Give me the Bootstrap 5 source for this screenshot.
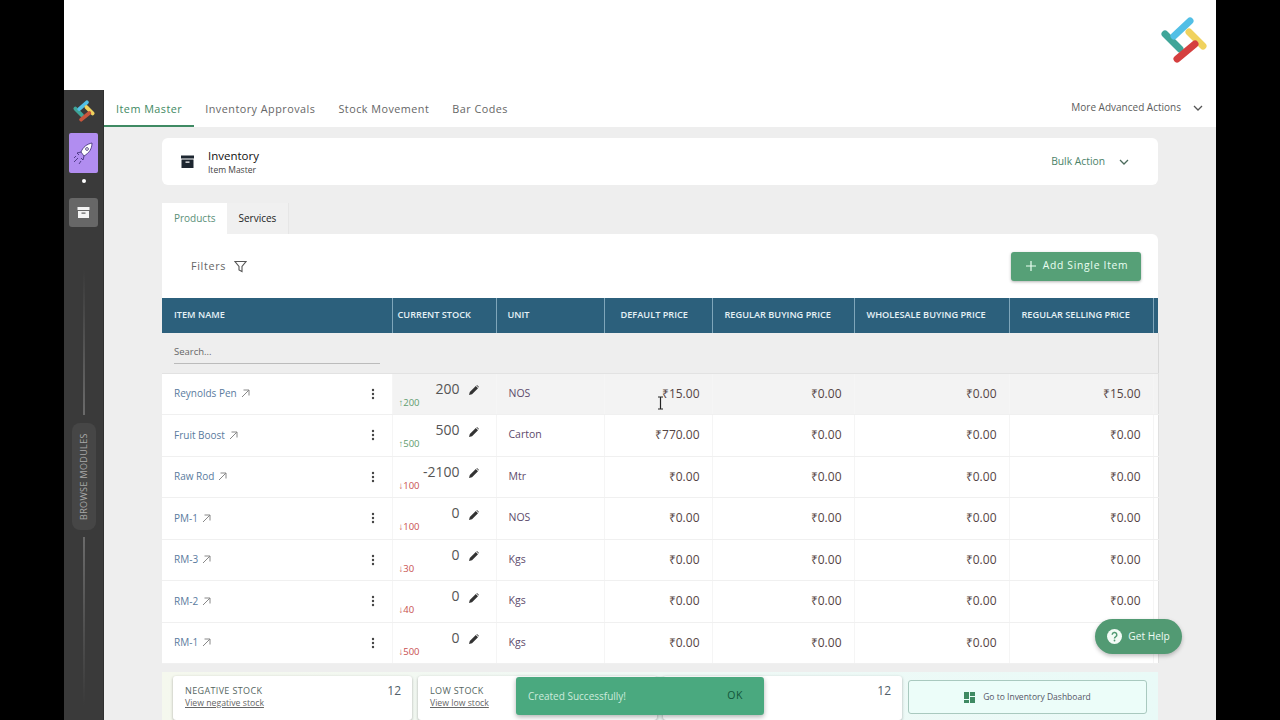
<!DOCTYPE html>
<html lang="en">
<head>
<meta charset="utf-8">
<title>Inventory</title>
<link href="https://cdn.jsdelivr.net/npm/bootstrap@5.3.0/dist/css/bootstrap.min.css" rel="stylesheet">
<style>
html,body{height:720px;overflow:hidden;background:#000;font-family:"Open Sans",sans-serif;}
.stage{width:1152px;height:720px;margin-left:64px;background:#eee;position:relative;overflow:hidden;}
.topband{height:90px;background:#fff;position:relative;}
.bigmark{position:absolute;left:1095px;top:15px;width:50px;height:50px;}
.shell{height:630px;}
.rail{width:40px;flex:none;background:#3a3a3a;border-right:1px solid #2f2f2f;}
.railmark{width:24px;height:24px;margin-top:9px;}
.tile-a{width:29px;height:40px;background:#b18df0;border-radius:2px;margin-top:10px;}
.dotty{width:4px;height:4px;background:#fff;border-radius:50%;margin-top:6px;}
.tile-b{width:29px;height:29px;background:#676767;border-radius:3px;margin-top:15px;}
.fade-a{width:2px;height:146px;margin-top:42px;background:linear-gradient(#3a3a3a,#6a6a6a);}
.pill-mod{width:24px;height:107px;margin-top:8px;background:#464646;border-radius:8px;color:#a8a8a8;font-size:9px;letter-spacing:.04em;writing-mode:vertical-rl;transform:rotate(180deg);}
.fade-b{width:2px;height:168px;margin-top:7px;background:linear-gradient(#6a6a6a,#3a3a3a);}
.workarea{flex:1;min-width:0;position:relative;}
.tabbar{height:37px;background:#fff;padding-left:0;}
.tabbar .nav-link{color:#666;font-size:10.8px;letter-spacing:.045em;padding:0 12px;height:37px;line-height:37px;margin-right:-1px;}
.tabbar .nav-link.active{color:#3f8a63;border-bottom:2px solid #3f8a63;}
.moreact{font-size:10px;color:#5c5c5c;margin-right:13px;margin-top:-2px;gap:12px;}
.page{padding:11px 58px 0 58px;}
.headcard{height:47px;background:#fff;border-radius:6px;padding:0 29px 0 19px;}
.headblock{gap:14px;}
.headcard h1{font-size:11.5px;font-weight:400;color:#111;margin:0;line-height:16px;}
.headcard .subline{font-size:8.5px;color:#444;line-height:12px;}
.bulk{font-size:10.3px;color:#4b8268;gap:14px;}
.prodtabs{margin-top:18px;border:0;height:31px;}
.prodtabs .nav-link{font-size:10px;border:0;border-radius:0;height:31px;line-height:31px;padding:0 12px;color:#222;background:#f0f0f0;border-right:1px solid #e6e6e6;}
.prodtabs .nav-link.active{background:#fff;color:#5b8f78;padding-right:11px;border-right:0;}
.mainpanel{background:#fff;border-radius:0 6px 0 0;}
.filterrow{height:64px;padding:0 17px 0 29px;}
.filterlabel{font-size:10.8px;letter-spacing:.06em;color:#666;gap:8px;}
.addbtn{background:#56a077;color:#eafff2;font-size:10.3px;letter-spacing:.07em;height:29px;width:130px;padding:0 0 0 2px;border:0;border-radius:3px;box-shadow:0 1px 3px rgba(0,0,0,.3);gap:7px;}
.addbtn:hover{background:#56a077;color:#eafff2;}
.sheet{table-layout:fixed;width:996px;margin:0;border-collapse:collapse;--bs-table-bg:transparent;}
.sheet th{background:#2c607c;color:#e5f1f6;font-size:9.2px;font-weight:600;height:35px;padding:0 0 2px 12px;vertical-align:middle;border:0;border-right:1px solid #7fa6ba;white-space:nowrap;}
.sheet th:nth-child(2){padding-left:5px;}
.sheet th:nth-child(3){padding-left:11px;}
.sheet th:nth-child(4){padding-left:16px;}
.sheet th:last-child{border-right:0;}
.searchrow td{background:#eee;height:40px;padding:0 0 2px 12px;border:0;border-bottom:1px solid #e2e2e2;border-right:1px solid #d8d8d8;vertical-align:middle;}
.searchbox{width:206px;height:24px;font-size:9.5px;color:#666;border-bottom:1px solid #bbb;line-height:24px;}
.sheet tbody tr.datarow td{height:41.5px;padding:0 12px;font-size:12px;color:#544;border:0;border-bottom:1px solid #f0f0f0;border-right:1px solid #f5f5f5;vertical-align:middle;background:#fff;text-align:right;}
.sheet tbody tr.datarow td:first-child{text-align:left;padding-right:17px;}
.sheet tbody tr.datarow td:nth-child(2){padding:3px 0 0 6px;}
.sheet tbody tr.datarow td:nth-child(3){font-size:10.5px;text-align:left;color:#5d4a6b;padding-left:12px;}
.sheet tbody tr.datarow td:last-child{padding:0;border-right:1px solid #e0e0e0;}
.sheet tbody tr.hot td:not(:first-child){background:#f3f3f3;}
.itemname{font-size:10px;color:#5a7b9e;gap:4px;}
.qty{font-size:14px;color:#555;line-height:18px;width:61px;text-align:right;margin-top:-3px;}
.stockline{gap:9px;}
.delta{font-size:9.5px;line-height:10px;text-align:left;margin-top:0;}
.delta-up{color:#5f9c6e;}
.delta-down{color:#c8504f;}
.foot{position:absolute;left:58px;top:582px;width:996px;height:48px;background:linear-gradient(90deg,#f5f8ee,#f0f9f6 50%,#e9faf7);padding:4px 11px 0 11px;gap:6px;}
.stat{width:239px;height:44px;background:#fff;border-radius:3px;box-shadow:0 1px 3px rgba(0,0,0,.3);padding:9px 11px 8px 12px;}
.stat-k{font-size:9px;letter-spacing:.04em;color:#55665f;line-height:12px;}
.stat-l{font-size:8.7px;color:#666;text-decoration:underline;line-height:13px;display:block;}
.stat-n{font-size:12px;color:#51606a;line-height:12px;}
.dashbtn{flex:1;height:34px;margin-top:4px;background:#ecfdf9;border:1px solid #a9c9bf;border-radius:3px;font-size:8.5px;color:#556;gap:8px;}
.toasty{position:absolute;left:412px;top:587px;width:248px;height:38px;background:#4aa97f;border-radius:3px;color:#cdebdc;font-size:10px;padding:0 21px 0 12px;box-shadow:0 2px 5px rgba(0,0,0,.3);}
.toasty-ok{color:#12553a;font-size:10.5px;letter-spacing:.06em;}
.helper{position:absolute;left:991px;top:529px;width:87px;height:35px;background:#529a73;border-radius:18px;color:#eefbf3;font-size:10.2px;gap:6px;box-shadow:0 2px 4px rgba(0,0,0,.25);}
.ibeam{position:absolute;left:553px;top:306px;}
</style>
</head>
<body>
<div class="stage">
  <div class="topband">
    <svg class="bigmark" viewBox="0 0 50 50" fill="none" stroke-linecap="round" stroke-width="7">
      <path d="M6 19L21 34" stroke="#3fa598"/><path d="M15 21L31 6" stroke="#52bfe6"/><path d="M30 17L44 31" stroke="#f0d25e"/><path d="M18 44L36 29" stroke="#d53f3f"/>
    </svg>
  </div>
  <div class="shell d-flex">
    <aside class="rail d-flex flex-column align-items-center">
      <svg class="railmark" viewBox="0 0 50 50" fill="none" stroke-linecap="round" stroke-width="8">
        <path d="M7 20L21 34" stroke="#3fa598"/><path d="M15 21L31 7" stroke="#52bfe6"/><path d="M30 17L43 30" stroke="#f0d25e"/><path d="M19 43L36 29" stroke="#c9563c"/>
      </svg>
      <div class="tile-a d-flex align-items-center justify-content-center">
        <svg width="22" height="24" viewBox="0 0 22 24" fill="none" stroke="#3a2a70" stroke-width=".8"><path d="M19 2C14 3 10 6 8 11L11 15C16 12 19 8 19 2Z" fill="#fff"/><circle cx="14" cy="8" r="1.400"/><path d="M8 11L4 12L6 14M11 15L10 19L8 17M5 17L1 21M8 20L6 23M3 15L1 17"/></svg>
      </div>
      <div class="dotty"></div>
      <div class="tile-b d-flex align-items-center justify-content-center">
        <svg width="13" height="13" viewBox="0 0 13 13" fill="#f4f4f4"><rect x="0.5" y="1" width="12" height="3"/><path d="M1 5h11v7H1zM4.500 6.500v1.200h4V6.500z" fill-rule="evenodd"/></svg>
      </div>
      <div class="fade-a"></div>
      <div class="pill-mod d-flex align-items-center justify-content-center">BROWSE MODULES</div>
      <div class="fade-b"></div>
    </aside>
    <div class="workarea">
      <div class="tabbar d-flex justify-content-between align-items-center">
        <ul class="nav">
          <li class="nav-item"><a class="nav-link active" href="#">Item Master</a></li>
          <li class="nav-item"><a class="nav-link" href="#">Inventory Approvals</a></li>
          <li class="nav-item"><a class="nav-link" href="#">Stock Movement</a></li>
          <li class="nav-item"><a class="nav-link" href="#">Bar Codes</a></li>
        </ul>
        <div class="moreact d-flex align-items-center">More Advanced Actions
          <svg width="10" height="6" viewBox="0 0 10 6" fill="none" stroke="#555" stroke-width="1.3"><path d="M1 1l4 4 4-4"/></svg>
        </div>
      </div>
      <div class="page">
        <div class="headcard d-flex align-items-center justify-content-between">
          <div class="headblock d-flex align-items-center">
            <svg width="13" height="13" viewBox="0 0 13 13" fill="#1d2630"><rect x="0" y="0.500" width="13" height="3"/><path d="M0.500 4.500h12V13H0.500zM4.500 6.500v1.300h4V6.500z" fill-rule="evenodd"/></svg>
            <div><h1>Inventory</h1><div class="subline">Item Master</div></div>
          </div>
          <div class="bulk d-flex align-items-center">Bulk Action
            <svg width="10" height="6" viewBox="0 0 10 6" fill="none" stroke="#4b6b5c" stroke-width="1.3"><path d="M1 1l4 4 4-4"/></svg>
          </div>
        </div>
        <ul class="nav prodtabs">
          <li class="nav-item"><a class="nav-link active" href="#">Products</a></li>
          <li class="nav-item"><a class="nav-link" href="#">Services</a></li>
        </ul>
        <div class="mainpanel">
          <div class="filterrow d-flex align-items-center justify-content-between">
            <div class="filterlabel d-flex align-items-center">Filters
              <svg width="13" height="13" viewBox="0 0 13 13" fill="none" stroke="#555" stroke-width="1.100"><path d="M1 1.500h11L8 6.500v5L5 10V6.500z"/></svg>
            </div>
            <button class="btn addbtn d-flex align-items-center justify-content-center" type="button">
              <svg width="10" height="10" viewBox="0 0 10 10" stroke="#eafff2" stroke-width="1.200"><path d="M5 0v10M0 5h10"/></svg>
              Add Single Item
            </button>
          </div>
          <table class="table sheet">
            <colgroup><col style="width:230px"><col style="width:104px"><col style="width:108px"><col style="width:108px"><col style="width:142px"><col style="width:155px"><col style="width:144px"><col style="width:5px"></colgroup>
            <thead><tr>
              <th>ITEM NAME</th><th>CURRENT STOCK</th><th>UNIT</th><th>DEFAULT PRICE</th><th>REGULAR BUYING PRICE</th><th>WHOLESALE BUYING PRICE</th><th>REGULAR SELLING PRICE</th><th></th>
            </tr></thead>
            <tbody>
              <tr class="searchrow"><td colspan="8"><div class="searchbox">Search...</div></td></tr>
              <tr class="datarow hot">
                <td><div class="d-flex justify-content-between align-items-center"><span class="itemname d-flex align-items-center">Reynolds Pen <svg width="9" height="9" viewBox="0 0 9 9" fill="none" stroke="#888"><path d="M1 8l7-7M2.500 1H8v5.500"/></svg></span><svg width="4" height="12" viewBox="0 0 4 12" fill="#444"><circle cx="2" cy="2" r="1.200"/><circle cx="2" cy="6" r="1.200"/><circle cx="2" cy="10" r="1.200"/></svg></div></td>
                <td><div class="stockline d-flex justify-content-start align-items-center"><div class="qty">200</div><svg width="10" height="10" viewBox="0 0 10 10" fill="#333"><path d="M0 10l.8-3L6.800 1 9 3.200 3 9.200zM7.400.4l.6-.4 2 2-.4.600z"/></svg></div><div class="delta delta-up">↑200</div></td>
                <td>NOS</td><td>₹15.00</td><td>₹0.00</td><td>₹0.00</td><td>₹15.00</td><td></td>
              </tr>
              <tr class="datarow">
                <td><div class="d-flex justify-content-between align-items-center"><span class="itemname d-flex align-items-center">Fruit Boost <svg width="9" height="9" viewBox="0 0 9 9" fill="none" stroke="#888"><path d="M1 8l7-7M2.500 1H8v5.500"/></svg></span><svg width="4" height="12" viewBox="0 0 4 12" fill="#444"><circle cx="2" cy="2" r="1.200"/><circle cx="2" cy="6" r="1.200"/><circle cx="2" cy="10" r="1.200"/></svg></div></td>
                <td><div class="stockline d-flex justify-content-start align-items-center"><div class="qty">500</div><svg width="10" height="10" viewBox="0 0 10 10" fill="#333"><path d="M0 10l.8-3L6.800 1 9 3.200 3 9.200zM7.400.4l.6-.4 2 2-.4.600z"/></svg></div><div class="delta delta-up">↑500</div></td>
                <td>Carton</td><td>₹770.00</td><td>₹0.00</td><td>₹0.00</td><td>₹0.00</td><td></td>
              </tr>
              <tr class="datarow">
                <td><div class="d-flex justify-content-between align-items-center"><span class="itemname d-flex align-items-center">Raw Rod <svg width="9" height="9" viewBox="0 0 9 9" fill="none" stroke="#888"><path d="M1 8l7-7M2.500 1H8v5.500"/></svg></span><svg width="4" height="12" viewBox="0 0 4 12" fill="#444"><circle cx="2" cy="2" r="1.200"/><circle cx="2" cy="6" r="1.200"/><circle cx="2" cy="10" r="1.200"/></svg></div></td>
                <td><div class="stockline d-flex justify-content-start align-items-center"><div class="qty">-2100</div><svg width="10" height="10" viewBox="0 0 10 10" fill="#333"><path d="M0 10l.8-3L6.800 1 9 3.200 3 9.200zM7.400.4l.6-.4 2 2-.4.600z"/></svg></div><div class="delta delta-down">↓100</div></td>
                <td>Mtr</td><td>₹0.00</td><td>₹0.00</td><td>₹0.00</td><td>₹0.00</td><td></td>
              </tr>
              <tr class="datarow">
                <td><div class="d-flex justify-content-between align-items-center"><span class="itemname d-flex align-items-center">PM-1 <svg width="9" height="9" viewBox="0 0 9 9" fill="none" stroke="#888"><path d="M1 8l7-7M2.500 1H8v5.500"/></svg></span><svg width="4" height="12" viewBox="0 0 4 12" fill="#444"><circle cx="2" cy="2" r="1.200"/><circle cx="2" cy="6" r="1.200"/><circle cx="2" cy="10" r="1.200"/></svg></div></td>
                <td><div class="stockline d-flex justify-content-start align-items-center"><div class="qty">0</div><svg width="10" height="10" viewBox="0 0 10 10" fill="#333"><path d="M0 10l.8-3L6.800 1 9 3.200 3 9.200zM7.400.4l.6-.4 2 2-.4.600z"/></svg></div><div class="delta delta-down">↓100</div></td>
                <td>NOS</td><td>₹0.00</td><td>₹0.00</td><td>₹0.00</td><td>₹0.00</td><td></td>
              </tr>
              <tr class="datarow">
                <td><div class="d-flex justify-content-between align-items-center"><span class="itemname d-flex align-items-center">RM-3 <svg width="9" height="9" viewBox="0 0 9 9" fill="none" stroke="#888"><path d="M1 8l7-7M2.500 1H8v5.500"/></svg></span><svg width="4" height="12" viewBox="0 0 4 12" fill="#444"><circle cx="2" cy="2" r="1.200"/><circle cx="2" cy="6" r="1.200"/><circle cx="2" cy="10" r="1.200"/></svg></div></td>
                <td><div class="stockline d-flex justify-content-start align-items-center"><div class="qty">0</div><svg width="10" height="10" viewBox="0 0 10 10" fill="#333"><path d="M0 10l.8-3L6.800 1 9 3.200 3 9.200zM7.400.4l.6-.4 2 2-.4.600z"/></svg></div><div class="delta delta-down">↓30</div></td>
                <td>Kgs</td><td>₹0.00</td><td>₹0.00</td><td>₹0.00</td><td>₹0.00</td><td></td>
              </tr>
              <tr class="datarow">
                <td><div class="d-flex justify-content-between align-items-center"><span class="itemname d-flex align-items-center">RM-2 <svg width="9" height="9" viewBox="0 0 9 9" fill="none" stroke="#888"><path d="M1 8l7-7M2.500 1H8v5.500"/></svg></span><svg width="4" height="12" viewBox="0 0 4 12" fill="#444"><circle cx="2" cy="2" r="1.200"/><circle cx="2" cy="6" r="1.200"/><circle cx="2" cy="10" r="1.200"/></svg></div></td>
                <td><div class="stockline d-flex justify-content-start align-items-center"><div class="qty">0</div><svg width="10" height="10" viewBox="0 0 10 10" fill="#333"><path d="M0 10l.8-3L6.800 1 9 3.200 3 9.200zM7.400.4l.6-.4 2 2-.4.600z"/></svg></div><div class="delta delta-down">↓40</div></td>
                <td>Kgs</td><td>₹0.00</td><td>₹0.00</td><td>₹0.00</td><td>₹0.00</td><td></td>
              </tr>
              <tr class="datarow">
                <td><div class="d-flex justify-content-between align-items-center"><span class="itemname d-flex align-items-center">RM-1 <svg width="9" height="9" viewBox="0 0 9 9" fill="none" stroke="#888"><path d="M1 8l7-7M2.500 1H8v5.500"/></svg></span><svg width="4" height="12" viewBox="0 0 4 12" fill="#444"><circle cx="2" cy="2" r="1.200"/><circle cx="2" cy="6" r="1.200"/><circle cx="2" cy="10" r="1.200"/></svg></div></td>
                <td><div class="stockline d-flex justify-content-start align-items-center"><div class="qty">0</div><svg width="10" height="10" viewBox="0 0 10 10" fill="#333"><path d="M0 10l.8-3L6.800 1 9 3.200 3 9.200zM7.400.4l.6-.4 2 2-.4.600z"/></svg></div><div class="delta delta-down">↓500</div></td>
                <td>Kgs</td><td>₹0.00</td><td>₹0.00</td><td>₹0.00</td><td></td><td></td>
              </tr>
            </tbody>
          </table>
        </div>
      </div>
      <div class="foot d-flex">
        <div class="stat d-flex justify-content-between"><div><div class="stat-k">NEGATIVE STOCK</div><a class="stat-l" href="#">View negative stock</a></div><div class="stat-n">12</div></div>
        <div class="stat d-flex justify-content-between"><div><div class="stat-k">LOW STOCK</div><a class="stat-l" href="#">View low stock</a></div></div>
        <div class="stat d-flex justify-content-end"><div class="stat-n">12</div></div>
        <div class="dashbtn d-flex align-items-center justify-content-center">
          <svg width="11" height="11" viewBox="0 0 11 11" fill="#3f8a63"><rect width="5" height="7"/><rect x="6" width="5" height="4"/><rect y="8" width="5" height="3"/><rect x="6" y="5" width="5" height="6"/></svg>
          Go to Inventory Dashboard
        </div>
      </div>
      <div class="toasty d-flex align-items-center justify-content-between"><span>Created Successfully!</span><span class="toasty-ok">OK</span></div>
      <div class="helper d-flex align-items-center justify-content-center">
        <svg width="15" height="15" viewBox="0 0 15 15"><circle cx="7.500" cy="7.500" r="7.500" fill="#f3fbf6"/><path d="M5.200 5.800a2.300 2.300 0 1 1 3.400 2c-.8.500-1.100.8-1.100 1.600" fill="none" stroke="#529a73" stroke-width="1.500"/><circle cx="7.500" cy="11.500" r=".9" fill="#529a73"/></svg>
        Get Help
      </div>
      <svg class="ibeam" width="7" height="14" viewBox="0 0 7 14" fill="none" stroke="#222" stroke-width="1.200"><path d="M1 1h5M3.500 1v12M1 13h5"/></svg>
    </div>
  </div>
</div>
<script src="https://cdn.jsdelivr.net/npm/bootstrap@5.3.0/dist/js/bootstrap.bundle.min.js"></script>
</body>
</html>
